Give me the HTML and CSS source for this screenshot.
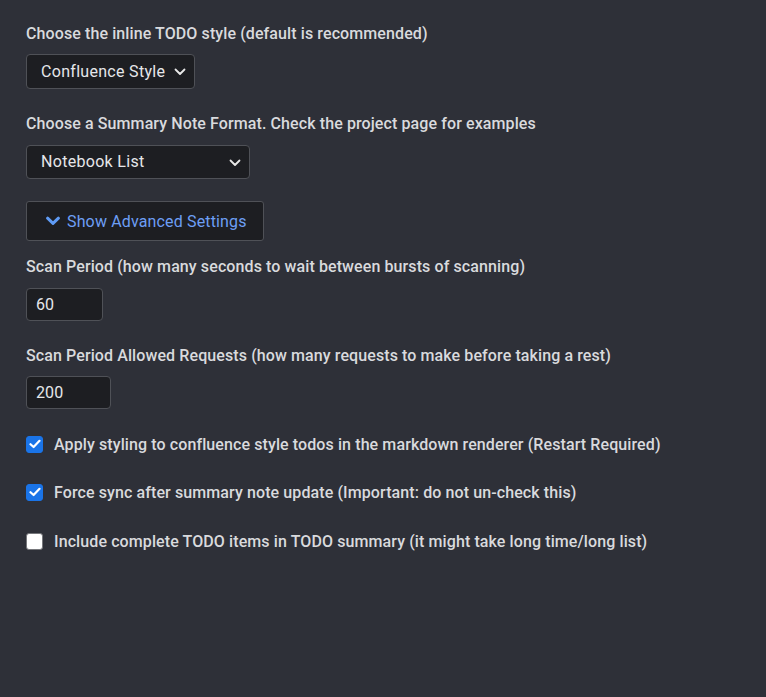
FILE: index.html
```html
<!DOCTYPE html>
<html>
<head>
<meta charset="utf-8">
<link rel="stylesheet" href="styles.css">
</head>
<body>
<div class="settings">
  <div class="label l1">Choose the inline TODO style (default is recommended)</div>
  <div class="select s1">
    <span>Confluence Style</span>
    <svg class="caret" width="12" height="8" viewBox="0 0 12 8"><path d="M1.5 1.5 L6 6 L10.5 1.5" fill="none" stroke="#e8e8e8" stroke-width="1.8" stroke-linecap="round" stroke-linejoin="round"/></svg>
  </div>
  <div class="label l2">Choose a Summary Note Format. Check the project page for examples</div>
  <div class="select s2">
    <span>Notebook List</span>
    <svg class="caret" width="12" height="8" viewBox="0 0 12 8"><path d="M1.5 1.5 L6 6 L10.5 1.5" fill="none" stroke="#e8e8e8" stroke-width="1.8" stroke-linecap="round" stroke-linejoin="round"/></svg>
  </div>
  <div class="button">
    <svg class="chev" width="14" height="10" viewBox="0 0 14 10"><path d="M1.6 2.2 L7 7.4 L12.4 2.2" fill="none" stroke="#5f9bf5" stroke-width="3" stroke-linecap="round" stroke-linejoin="round"/></svg>
    <span>Show Advanced Settings</span>
  </div>
  <div class="label l3">Scan Period (how many seconds to wait between bursts of scanning)</div>
  <div class="input i1">60</div>
  <div class="label l4">Scan Period Allowed Requests (how many requests to make before taking a rest)</div>
  <div class="input i2">200</div>
  <div class="check c1">
    <span class="box on"><svg width="12" height="10" viewBox="0 0 12 10"><path d="M1.5 5.2 L4.6 8 L10.5 1.8" fill="none" stroke="#fff" stroke-width="2.2" stroke-linecap="round" stroke-linejoin="round"/></svg></span>
    <span class="text">Apply styling to confluence style todos in the markdown renderer (Restart Required)</span>
  </div>
  <div class="check c2">
    <span class="box on"><svg width="12" height="10" viewBox="0 0 12 10"><path d="M1.5 5.2 L4.6 8 L10.5 1.8" fill="none" stroke="#fff" stroke-width="2.2" stroke-linecap="round" stroke-linejoin="round"/></svg></span>
    <span class="text">Force sync after summary note update (Important: do not un-check this)</span>
  </div>
  <div class="check c3">
    <span class="box"></span>
    <span class="text">Include complete TODO items in TODO summary (it might take long time/long list)</span>
  </div>
</div>
</body>
</html>
```

FILE: styles.css
```css
html, body {
  margin: 0;
  padding: 0;
  background: #2e3038;
  height: 100%;
}
body {
  font-family: Roboto, "Noto Sans", sans-serif;
  font-size: 16px;
  letter-spacing: 0.1px;
  color: #dcdde0;
}
.settings {
  padding: 22px 26px 0 26px;
  display: flex;
  flex-direction: column;
  align-items: flex-start;
}
.label {
  font-weight: 500;
  line-height: 24px;
  color: #d9dadd;
}
.l1 { margin-bottom: 8px; }
.l2 { margin-top: 23px; margin-bottom: 9px; }
.l3 { margin-top: 14px; margin-bottom: 9px; }
.l4 { margin-top: 23px; margin-bottom: 8px; }

.select {
  box-sizing: border-box;
  display: flex;
  align-items: center;
  justify-content: space-between;
  background: #1d1e22;
  border: 1px solid #4f5157;
  border-radius: 4px;
  color: #e6e7ea;
  line-height: 20px;
  letter-spacing: 0.3px;
  padding: 0 8px 0 14px;
}
.s1 { width: 169px; height: 35px; }
.s2 { width: 224px; height: 34px; }
.caret { margin-top: 1px; }

.button {
  box-sizing: border-box;
  margin-top: 22px;
  width: 238px;
  height: 40px;
  display: flex;
  align-items: center;
  gap: 7px;
  padding-left: 19px;
  background: #1d1e22;
  border: 1px solid #4f5157;
  border-radius: 3px;
  color: #6d9ff5;
  letter-spacing: 0.15px;
}

.input {
  box-sizing: border-box;
  height: 33px;
  background: #1d1e22;
  border: 1px solid #4f5157;
  border-radius: 4px;
  color: #e6e7ea;
  line-height: 31px;
  padding-left: 9px;
}
.i1 { width: 77px; }
.i2 { width: 85px; }

.check {
  display: flex;
  align-items: center;
  height: 24px;
  font-weight: 500;
  color: #d9dadd;
}
.c1 { margin-top: 23px; }
.c2 { margin-top: 24px; }
.c3 { margin-top: 25px; }
.box {
  box-sizing: border-box;
  width: 17px;
  height: 17px;
  border-radius: 3px;
  background: #fff;
  border: 1px solid #76777b;
  margin-right: 11px;
  display: flex;
  align-items: center;
  justify-content: center;
}
.box.on {
  background: #1a74e8;
  border-color: #1a74e8;
}
```
